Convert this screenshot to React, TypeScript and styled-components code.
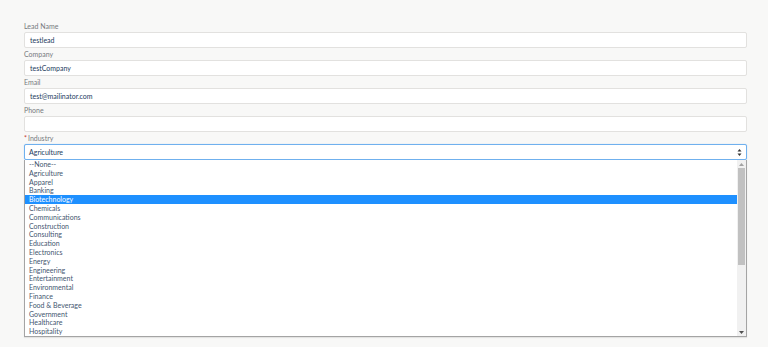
import React from "react";
import styled, { createGlobalStyle } from "styled-components";

const Global = createGlobalStyle`
  html, body { margin: 0; padding: 0; background: #f8f8f7; }
  body { font-family: Lato, "Open Sans", sans-serif; }
`;

const Page = styled.div`
  width: 768px;
  height: 347px;
  box-sizing: border-box;
  padding: 20px 21px 0 24px;
  background: #f8f8f7;
  overflow: hidden;
`;

const Field = styled.div`
  display: flex;
  flex-direction: column;
`;

const Label = styled.div`
  height: 12px;
  line-height: 12px;
  font-size: 7px;
  color: #777a80;
  display: flex;
  align-items: center;
`;

const Req = styled.span`
  color: #c23934;
  margin-right: 1px;
`;

const Input = styled.div`
  height: 16px;
  box-sizing: border-box;
  background: #fff;
  border: 1px solid #e2e1df;
  border-radius: 2px;
  padding-left: 5px;
  font-size: 7px;
  line-height: 14px;
  color: #213a5c;
`;

const SelectBox = styled.div`
  height: 16px;
  box-sizing: border-box;
  background: #fff;
  border: 1px solid #6fb0ee;
  box-shadow: 0 0 1px #9fcaf3;
  border-radius: 2px;
  padding: 0 4px 0 4px;
  font-size: 7px;
  color: #213a5c;
  display: flex;
  align-items: center;
  justify-content: space-between;
`;

const Dropdown = styled.div`
  height: 177px;
  box-sizing: border-box;
  background: #fff;
  border: 1px solid #a4a4a4;
  border-top: none;
  box-shadow: 0 1px 1px rgba(0, 0, 0, 0.08);
  display: flex;
  overflow: hidden;
`;

const List = styled.div`
  flex: 1;
  overflow: hidden;
`;

const Option = styled.div<{ $active?: boolean }>`
  height: 8.8px;
  line-height: 8.8px;
  padding-left: 4px;
  font-size: 7px;
  white-space: nowrap;
  color: ${(p) => (p.$active ? "#ffffff" : "#44566f")};
  background: ${(p) => (p.$active ? "#1e90ff" : "transparent")};
`;

const Scrollbar = styled.div`
  width: 9px;
  background: #f1f1f1;
  display: flex;
  flex-direction: column;
  align-items: stretch;
`;

const Arrow = styled.div`
  height: 8px;
  display: flex;
  align-items: center;
  justify-content: center;
`;

const Track = styled.div`
  flex: 1;
  display: flex;
  flex-direction: column;
  padding: 0 1px;
`;

const Thumb = styled.div`
  height: 97px;
  background: #c1c1c1;
`;

const options = [
  "--None--",
  "Agriculture",
  "Apparel",
  "Banking",
  "Biotechnology",
  "Chemicals",
  "Communications",
  "Construction",
  "Consulting",
  "Education",
  "Electronics",
  "Energy",
  "Engineering",
  "Entertainment",
  "Environmental",
  "Finance",
  "Food & Beverage",
  "Government",
  "Healthcare",
  "Hospitality",
];

export default function App() {
  return (
    <>
      <Global />
      <Page>
        <Field>
          <Label>Lead Name</Label>
          <Input>testlead</Input>
        </Field>
        <Field>
          <Label>Company</Label>
          <Input>testCompany</Input>
        </Field>
        <Field>
          <Label>Email</Label>
          <Input>test@mailinator.com</Input>
        </Field>
        <Field>
          <Label>Phone</Label>
          <Input />
        </Field>
        <Field>
          <Label>
            <Req>*</Req>Industry
          </Label>
          <SelectBox>
            <span>Agriculture</span>
            <svg width="5" height="9" viewBox="0 0 5 9">
              <path d="M2.5 1 L4.5 3.6 L0.5 3.6 Z" fill="#333" />
              <path d="M2.5 8 L4.5 5.4 L0.5 5.4 Z" fill="#333" />
            </svg>
          </SelectBox>
          <Dropdown>
            <List>
              {options.map((o) => (
                <Option key={o} $active={o === "Biotechnology"}>
                  {o}
                </Option>
              ))}
            </List>
            <Scrollbar>
              <Arrow>
                <svg width="5" height="3" viewBox="0 0 5 3">
                  <path d="M2.5 0 L5 3 L0 3 Z" fill="#a3a3a3" />
                </svg>
              </Arrow>
              <Track>
                <Thumb />
              </Track>
              <Arrow>
                <svg width="5" height="3" viewBox="0 0 5 3">
                  <path d="M0 0 L5 0 L2.5 3 Z" fill="#505050" />
                </svg>
              </Arrow>
            </Scrollbar>
          </Dropdown>
        </Field>
      </Page>
    </>
  );
}
